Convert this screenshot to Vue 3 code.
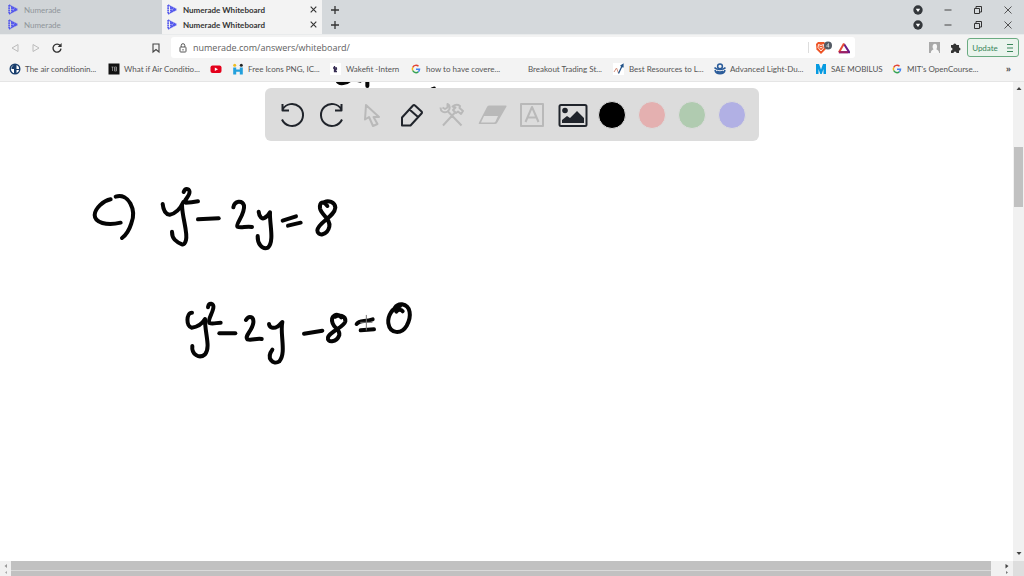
<script setup>
import { ref } from 'vue'

const url = ref('numerade.com/answers/whiteboard/')
const rows = [0, 1]
const bookmarks = [
  { icon: 'circle', text: 'The air conditionin...' },
  { icon: 'black', text: 'What if Air Conditio...' },
  { icon: 'youtube', text: '' },
  { icon: 'people', text: 'Free Icons PNG, IC...' },
  { icon: 'tee', text: 'Wakefit -Intern' },
  { icon: 'google', text: 'how to have covere...' },
  { icon: 'none', text: 'Breakout Trading St...' },
  { icon: 'chart', text: 'Best Resources to L...' },
  { icon: 'dot', text: 'Advanced Light-Du...' },
  { icon: 'mobilus', text: 'SAE MOBILUS' },
  { icon: 'google', text: "MIT's OpenCourse..." },
]
const colours = [
  { name: 'Black', cls: 'ink-black' },
  { name: 'Red', cls: 'ink-red' },
  { name: 'Green', cls: 'ink-green' },
  { name: 'Blue', cls: 'ink-blue' },
]
</script>

<template>
  <div class="browser">
    <header class="tabstrip">
      <div v-for="r in rows" :key="r" class="tabrow">
        <button class="tab idle">
          <svg class="logo" viewBox="0 0 20 20"><path d="M2 2v16M2 2l15 8M2 18l15-8M7 6v8l7-4z" /></svg>
          <span>Numerade</span>
        </button>
        <div class="tab current">
          <button class="tabname">
            <svg class="logo" viewBox="0 0 20 20"><path d="M2 2v16M2 2l15 8M2 18l15-8M7 6v8l7-4z" /></svg>
            <span>Numerade Whiteboard</span>
          </button>
          <button class="mini" aria-label="Close tab">
            <svg viewBox="0 0 8 8"><path d="M1.5 1.5l5 5M6.5 1.5l-5 5" stroke="#333" stroke-width="1" /></svg>
          </button>
        </div>
        <button class="add" aria-label="New tab">
          <svg viewBox="0 0 10 10"><path d="M5 1v8M1 5h8" stroke="#333" stroke-width="1.3" /></svg>
        </button>
        <div class="window">
          <button aria-label="Search tabs"><svg viewBox="0 0 10 10"><circle cx="5" cy="5" r="4.7" fill="#33373b" /><path d="M2.8 3.8h4.4L5 7z" fill="#fff" /></svg></button>
          <button aria-label="Minimize"><svg viewBox="0 0 10 10"><path d="M1.5 5h7" stroke="#444" /></svg></button>
          <button aria-label="Restore"><svg viewBox="0 0 10 10" fill="none" stroke="#333"><path d="M1.5 3.5h5v5h-5zM3 3V1.5h5.500V7H7" /></svg></button>
          <button aria-label="Close"><svg viewBox="0 0 10 10"><path d="M1.500 1.500l7 7M8.500 1.500l-7 7" stroke="#444" stroke-width=".9" /></svg></button>
        </div>
      </div>
    </header>

    <nav class="navbar">
      <div class="history">
        <button aria-label="Back"><svg viewBox="0 0 12 12"><path d="M9 2.500v7L3 6z" fill="none" stroke="#bbb" /></svg></button>
        <button aria-label="Forward"><svg viewBox="0 0 12 12"><path d="M3 2.500v7L9 6z" fill="none" stroke="#bbb" /></svg></button>
        <button aria-label="Reload"><svg viewBox="0 0 12 12"><path d="M9.300 3.800A4 4 0 1 0 10 6.700" fill="none" stroke="#333" stroke-width="1.400" /><path d="M10.600 1v4H6.700z" fill="#333" /></svg></button>
      </div>
      <button class="save" aria-label="Bookmark"><svg viewBox="0 0 12 12"><path d="M3 2h6v8L6 7.500 3 10z" fill="none" stroke="#444" stroke-width="1.100" /></svg></button>
      <div class="address">
        <svg class="lock" viewBox="0 0 12 12" fill="none" stroke="#555"><rect x="3" y="5" width="6" height="5" rx=".7" /><path d="M4.200 5V3.500a1.800 1.800 0 0 1 3.600 0V5M6 7v1.500" /></svg>
        <input v-model="url" aria-label="Address" spellcheck="false" />
        <i class="rule"></i>
        <svg class="shield" viewBox="0 0 18 14"><path d="M3 1h6l2 2-.5 5.500L6 13 1.500 8.500 1 3z" fill="#ee5426" /><path d="M3.500 3.500L6 4.500l2.500-1L9 6.500 6 10 3 6.500zM4.500 6L6 7l1.500-1" fill="none" stroke="#fff" stroke-width=".9" /><circle cx="13" cy="4.500" r="4" fill="#535a64" /><path d="M13.500 6.500v-4l-2 2.800h2.800" fill="none" stroke="#ddd" stroke-width=".7" /></svg>
        <svg class="bat" viewBox="0 0 12 12"><path d="M.8 10.200h10.400L6 2" fill="none" stroke="#6a1d86" stroke-width="2" /><path d="M6 1.500L1 10.200" stroke="#e54b35" stroke-width="2" /><path d="M1 10.200h9" stroke="#9e1f63" stroke-width="2" /></svg>
      </div>
      <button class="avatar" aria-label="Profile"><svg viewBox="0 0 12 12"><path d="M0 0h12v12H0z" fill="#a9a9a9" /><path d="M2 12c0-2 1-3 3-4-2-2-1-6 1.500-6S9.500 6 8 8c2 1 3 2 3 4z" fill="#f7f7f7" /></svg></button>
      <button class="puzzle" aria-label="Extensions"><svg viewBox="0 0 12 12"><path d="M2 3h2.200a1.600 1.600 0 1 1 3.200 0H10v2.500a1.500 1.500 0 1 1 0 3V11H7.500a1.500 1.500 0 0 0-3 0H2V8.500a1.500 1.500 0 0 0 0-3z" fill="#333" /></svg></button>
      <button class="update">
        <span>Update</span>
        <svg viewBox="0 0 8 10"><path d="M1 1.500h6M1 5h6M1 8.500h6" stroke="#39865a" /></svg>
      </button>
    </nav>

    <nav class="bookmarks">
      <a v-for="(b, i) in bookmarks" :key="i" href="#" :aria-label="b.text || 'YouTube'">
        <svg viewBox="0 0 12 12">
          <g v-if="b.icon === 'circle'"><circle cx="6" cy="6" r="4.800" fill="#fff" stroke="#183e6d" stroke-width="1.400" /><path d="M4.500 2H7.500V10.500H5V6H2.500V4.500z" fill="#183e6d" /><path d="M7 6.500h3" stroke="#183e6d" /></g>
          <g v-else-if="b.icon === 'black'"><path d="M.5 .5h11v11H.5z" fill="#111" /><path d="M3.500 4h2M4.500 4v4M6.500 4h2v4h-2zM6.500 6h2" stroke="#aaa" stroke-width=".7" fill="none" /></g>
          <g v-else-if="b.icon === 'youtube'"><rect x=".5" y="2.500" width="11" height="7.500" rx="2" fill="#e4001b" /><path d="M4.800 4.500v3.500L8 6.200z" fill="#fff" /></g>
          <g v-else-if="b.icon === 'people'"><circle cx="2.700" cy="2.200" r="1.500" fill="#eebc22" /><circle cx="9.300" cy="2.200" r="1.500" fill="#222" /><path d="M1.200 4.500h3v2h3.600v-2h3V11.500h-3V8.700H4.200v2.800h-3z" fill="#23a0dc" /></g>
          <g v-else-if="b.icon === 'tee'"><path d="M0 0h11v12H0z" fill="#fff" /><path d="M4.500 3v5.500h2.500M3 5h4M5 7.500L7 5.500" stroke="#352b52" stroke-width="1.300" fill="none" /></g>
          <g v-else-if="b.icon === 'google'" fill="none" stroke-width="1.500"><path d="M8.500 3.300A3.600 3.600 0 0 0 2.700 4.500" stroke="#e34334" /><path d="M2.700 4.500a3.600 3.600 0 0 0 0 3" stroke="#f5b914" /><path d="M2.700 7.500A3.600 3.600 0 0 0 8.300 8.800" stroke="#33a353" /><path d="M8.300 8.800A3.600 3.600 0 0 0 9.500 6.200H6" stroke="#4184f3" /></g>
          <g v-else-if="b.icon === 'chart'" fill="none"><path d="M0 0h11v12H0z" fill="#fff" /><path d="M1 9l2.500-4 2 5" stroke="#d1907d" /><path d="M5.500 10.500L9.500 2M7.500 3L10 1.500v3" stroke="#245489" stroke-width="1.300" /></g>
          <g v-else-if="b.icon === 'dot'"><circle cx="6" cy="3.300" r="2.400" fill="none" stroke="#2b5c9a" stroke-width="1.500" /><path d="M.5 4.500C3 7 9 7 11.500 4.500M1 7c1 5 9 5 10 0M3 8c1 1.500 5 1.500 6 0" fill="none" stroke="#2b5c9a" stroke-width="1.600" /></g>
          <g v-else-if="b.icon === 'mobilus'"><path d="M1 11V1h3l2 5.500L8 1h3v10H8.500V6L6.700 11H5.300L3.500 6v5z" fill="#079be1" /></g>
        </svg>
        <span v-if="b.text">{{ b.text }}</span>
      </a>
      <button aria-label="More bookmarks">»</button>
    </nav>

    <main class="viewport">
      <section class="board">
        <svg class="ink" viewBox="0 0 1013 479" preserveAspectRatio="xMinYMin meet">
          <g transform="translate(0 -82)">
            <g transform="translate(260 74) scale(.333333)">
              <path d="M232 20Q236 29 250 27Q262 26 268 20M322 16V36M292 18L300 20M516 46L522 44" />
            </g>
            <g transform="translate(80 180) scale(.333333)">
              <path d="M92 58C70 62 45 85 44 105C44 128 80 138 122 128" />
              <path d="M107 50C146 38 170 90 154 130C147 152 138 165 126 174" />
              <path d="M248 72C250 92 258 103 269 104C286 101 300 88 310 66M306 74C306 110 324 158 318 180Q314 196 306 193C288 185 276 177 276 155" />
              <path d="M311 36C316 22 332 26 328 40C325 53 308 65 317 68Q334 68 354 64" />
              <path d="M354 118L416 115" />
              <path d="M460 82C464 62 486 60 492 76C496 102 466 132 472 140C482 145 498 138 516 141" />
              <path d="M536 95C538 112 546 118 553 114C562 111 566 104 570 97C568 130 584 183 564 203C546 210 532 190 533 168" />
              <path d="M608 122L648 109M624 137L662 128" />
              <path d="M742 78C730 60 718 67 720 85C724 104 753 118 748 140C742 167 712 170 712 151C714 127 764 110 766 83C765 65 744 61 734 66" />
            </g>
            <g transform="translate(170 290) scale(.333333)">
              <path d="M66 68C48 68 48 110 65 113C83 111 96 102 105 87C104 128 123 173 105 193C88 207 64 194 67 168" />
              <path d="M114 52C116 37 133 38 130 54C127 72 112 89 118 99C128 103 140 98 152 98" />
              <path d="M148 130L196 130" />
              <path d="M228 90C237 75 252 80 250 98C247 122 223 137 232 148C245 152 260 144 275 147" />
              <path d="M297 102C298 113 311 117 322 110C329 106 332 101 337 96C329 130 350 190 328 214C310 226 287 205 307 179" />
              <path d="M402 131L457 122" />
              <path d="M514 82C500 66 480 78 488 100C494 117 512 119 508 135C500 158 470 160 474 142C480 124 522 112 526 94C528 76 505 73 496 80" />
              <path d="M560 102C568 90 582 96 608 88M572 121L612 118" />
              <path d="M679 65C684 58 694 57 698 64M690 48C668 52 652 78 655 100C660 132 694 134 710 107C726 78 722 47 696 43C684 42 678 48 674 54" />
              <path class="cross" d="M589 76V120M572 97H606" />
            </g>
          </g>
        </svg>

        <div class="tools" role="toolbar" aria-label="Drawing tools">
          <button aria-label="Undo"><svg viewBox="0 0 28 28"><path d="M4.500 3v6.500H11M4.500 8.500A11 11 0 1 1 4 18.500" /></svg></button>
          <button aria-label="Redo"><svg viewBox="0 0 28 28"><path d="M23.500 3v6.500H17M23.500 8.500A11 11 0 1 0 24 18.500" /></svg></button>
          <button class="off" aria-label="Select"><svg viewBox="0 0 28 28"><path d="M8 4L7 18.500l4-2.500 4 9 4.500-2-4-7h5.500z" /></svg></button>
          <button aria-label="Pen"><svg viewBox="0 0 28 28"><path d="M4 24.500V16.500L15 4.500q1-1 2 0l6.500 6q1 1 0 2L12.500 24.500zM11.500 8.500l8.500 7.500" /></svg></button>
          <button class="off" aria-label="Settings"><svg viewBox="0 0 28 28"><path d="M10 10.500L23.500 24.500M16.500 12L5 24.500M2.500 6.500c0 4 3.500 6 7 4 3-2 3-6 0-7.500v3.500L7 8 4.500 6.500M14.500 5.500C17 3.500 20 3.500 22 5l-.5 2 3.500 3-2 3-3-2.500-2 1.500-3-3 2.500-2.500z" /></svg></button>
          <button class="off eraser" aria-label="Eraser"><svg viewBox="0 0 28 28"><path d="M11 4.500H27.500q1.500 0 1 1L19 22q-.5 1-2 1H1.500q-1.500 0-.5-1.500L9 6q.5-1.500 2-1.500z" fill="#b9b9b9" /><path d="M6 15H20L17.500 20.500q-.5 1-1.500 1H3z" fill="#dedede" /></svg></button>
          <button class="off" aria-label="Text"><svg viewBox="0 0 28 28"><path d="M3 3h22v22H3zM7.500 21L14 6l6.500 15M9.500 16.500h9" /></svg></button>
          <button class="wide" aria-label="Image"><svg viewBox="0 0 32 28"><rect x="3.500" y="4" width="27" height="21" rx="1.500" /><circle cx="9" cy="9.500" r="2.800" fill="#20242b" stroke="none" /><path d="M6 22v-3l5-4 3 2 7-7 7 7v5z" fill="#20242b" stroke="none" /></svg></button>
          <button v-for="c in colours" :key="c.name" class="swatch" :class="c.cls" :aria-label="c.name"></button>
        </div>
      </section>
      <div class="vscroll" aria-hidden="true">
        <svg viewBox="0 0 10 10"><path d="M2.500 7L5 4l2.500 3z" fill="#444" /></svg>
        <div class="track"><i></i></div>
        <svg viewBox="0 0 10 10"><path d="M2.500 3L5 6l2.500-3z" fill="#444" /></svg>
      </div>
    </main>
    <footer class="hscroll" aria-hidden="true">
      <svg class="arrow" viewBox="0 0 11 15"><path d="M7 3v4L4.500 5z" fill="#999" /><path d="M7 10v3l-2-1.500z" fill="#aaa" /></svg>
      <div class="thumb"><i></i><i></i></div>
      <svg class="arrow end" viewBox="0 0 22 15"><path d="M14.500 3v4.500L17.500 5z" fill="#444" /><path d="M15 10v3l2-1.500z" fill="#777" /></svg>
      <span class="corner"></span>
    </footer>
  </div>
</template>

<style>
html, body, #app { height: 100%; }
body { margin: 0; overflow: hidden; }
</style>

<style scoped>
* { box-sizing: border-box; }
.browser { height: 100%; display: flex; flex-direction: column; background: #fff; color: #555; font: 8px/12px Lato, "Open Sans", sans-serif; }
button { margin: 0; padding: 0; border: 0; background: none; font: inherit; color: inherit; display: flex; align-items: center; justify-content: center; }
svg { display: block; flex: none; }

.tabstrip { flex: none; background: #d5d9dc; }
.tabrow { display: flex; height: 15px; box-sizing: content-box; align-items: stretch; background: linear-gradient(90deg, #d0d4d7 162px, #f3f3f3 162px 322px, #d5d9dc 322px); }
.tabrow:first-child { padding-top: 2px; }
.tabrow:last-child { padding-bottom: 2px; }
.tab { display: flex; align-items: center; }
.idle { width: 162px; padding-left: 8px; gap: 5px; justify-content: flex-start; color: #8f959a; }
.current { width: 160px; padding: 0 4px 0 5px; justify-content: space-between; color: #333; font-weight: 700; }
.tabname { gap: 5px; }
.logo { width: 11px; height: 11px; fill: #a6a8f5; stroke: #5357ec; stroke-width: 3; stroke-dasharray: 3 1; }
.mini svg { width: 9px; height: 9px; }
.add { width: 26px; }
.add svg { width: 10px; height: 10px; }
.window { margin-left: auto; display: flex; padding-right: 1px; }
.window button { width: 30px; }
.window svg { width: 10px; height: 10px; }

.navbar { flex: none; height: 26px; display: flex; align-items: center; background: #f3f3f3; padding: 0 5px 0 9px; border-top: 1px solid #e9ebec; }
.history { display: flex; gap: 9px; }
.history svg, .save svg { width: 12px; height: 12px; }
.save { margin-left: 87px; width: 12px; }
.address { flex: 1; height: 21px; margin-left: 9px; padding: 0 5px 0 6px; display: flex; align-items: center; background: #fff; border-radius: 3px; }
.lock { width: 12px; height: 12px; }
.address input { flex: 1; min-width: 0; margin: 0 0 0 4px; padding: 0; border: 0; outline: 0; background: none; color: #606060; font: 9px/14px "Open Sans", "Noto Sans", sans-serif; }
.rule { width: 1px; height: 11px; background: #ddd; }
.shield { width: 18px; height: 14px; margin-left: 6px; }
.bat { width: 12px; height: 12px; margin-left: 5px; }
.avatar { margin-left: 74px; }
.avatar svg { width: 11px; height: 11px; }
.puzzle { margin-left: 9px; }
.puzzle svg { width: 12px; height: 12px; }
.update { width: 52px; height: 19px; margin-left: 6px; gap: 8px; border: 1px solid #6bab82; border-radius: 3px; background: #eaf4ed; color: #39865a; }
.update svg { width: 8px; height: 10px; }

.bookmarks { flex: none; height: 22px; padding: 0 0 3px 9px; display: grid; align-items: center; grid-template-columns: 99fr 102fr 22fr 98fr 80fr 102fr 101fr 101fr 101fr 76fr 109fr 24fr; background: #f3f3f3; border-bottom: 1px solid #e5e5e5; }
.bookmarks a { display: flex; gap: 4px; align-items: center; min-width: 0; color: #555; text-decoration: none; white-space: nowrap; }
.bookmarks a svg { width: 12px; height: 12px; }
.bookmarks button { font-family: "Open Sans", sans-serif; font-weight: 700; justify-content: flex-start; padding-left: 6px; }

.viewport { flex: 1; min-height: 0; display: flex; }
.board { position: relative; flex: 1; min-width: 0; overflow: hidden; }
.ink { width: 100%; height: 100%; fill: none; stroke: #050505; stroke-width: 12; stroke-linecap: round; stroke-linejoin: round; }
.ink .cross { stroke: #777; stroke-width: 3; }
.tools { position: absolute; top: 6px; left: 50vw; transform: translateX(-50%); height: 53px; padding: 0 13px; display: flex; align-items: center; gap: 12px; background: #dcdcdc; border-radius: 6px; }
.tools button { width: 28px; height: 28px; flex: none; }
.tools svg { width: 28px; height: 28px; overflow: visible; fill: none; stroke: #20242b; stroke-width: 2; stroke-linejoin: round; }
.tools .off svg { stroke: #b9b9b9; }
.tools .eraser svg { stroke: none; }
.tools .wide svg { width: 32px; }
.tools .swatch { border-radius: 50%; border: 1px solid #dcdcdc; }
.ink-black { background: #000; }
.ink-red { background: #e4b0b0; }
.ink-green { background: #b0cbb0; }
.ink-blue { background: #b1b0e4; }

.vscroll { width: 11px; flex: none; background: #f1f1f1; display: flex; flex-direction: column; align-items: center; padding: 1px 0 2px; }
.vscroll svg { width: 10px; height: 10px; }
.track { flex: 1; width: 9px; display: flex; flex-direction: column; }
.track::before { content: ""; flex: 54; }
.track::after { content: ""; flex: 343; }
.track i { flex: 60; background: #c1c1c1; }
.hscroll { flex: none; height: 15px; display: flex; background: #f1f1f1; }
.arrow { width: 11px; height: 15px; }
.arrow.end { width: 22px; }
.thumb { flex: 1; display: flex; flex-direction: column; gap: 1px; background: #dadada; }
.thumb i { background: #c1c1c1; flex: 9; }
.thumb i + i { flex: 5; }
.corner { width: 11px; background: #dedede; }
</style>
